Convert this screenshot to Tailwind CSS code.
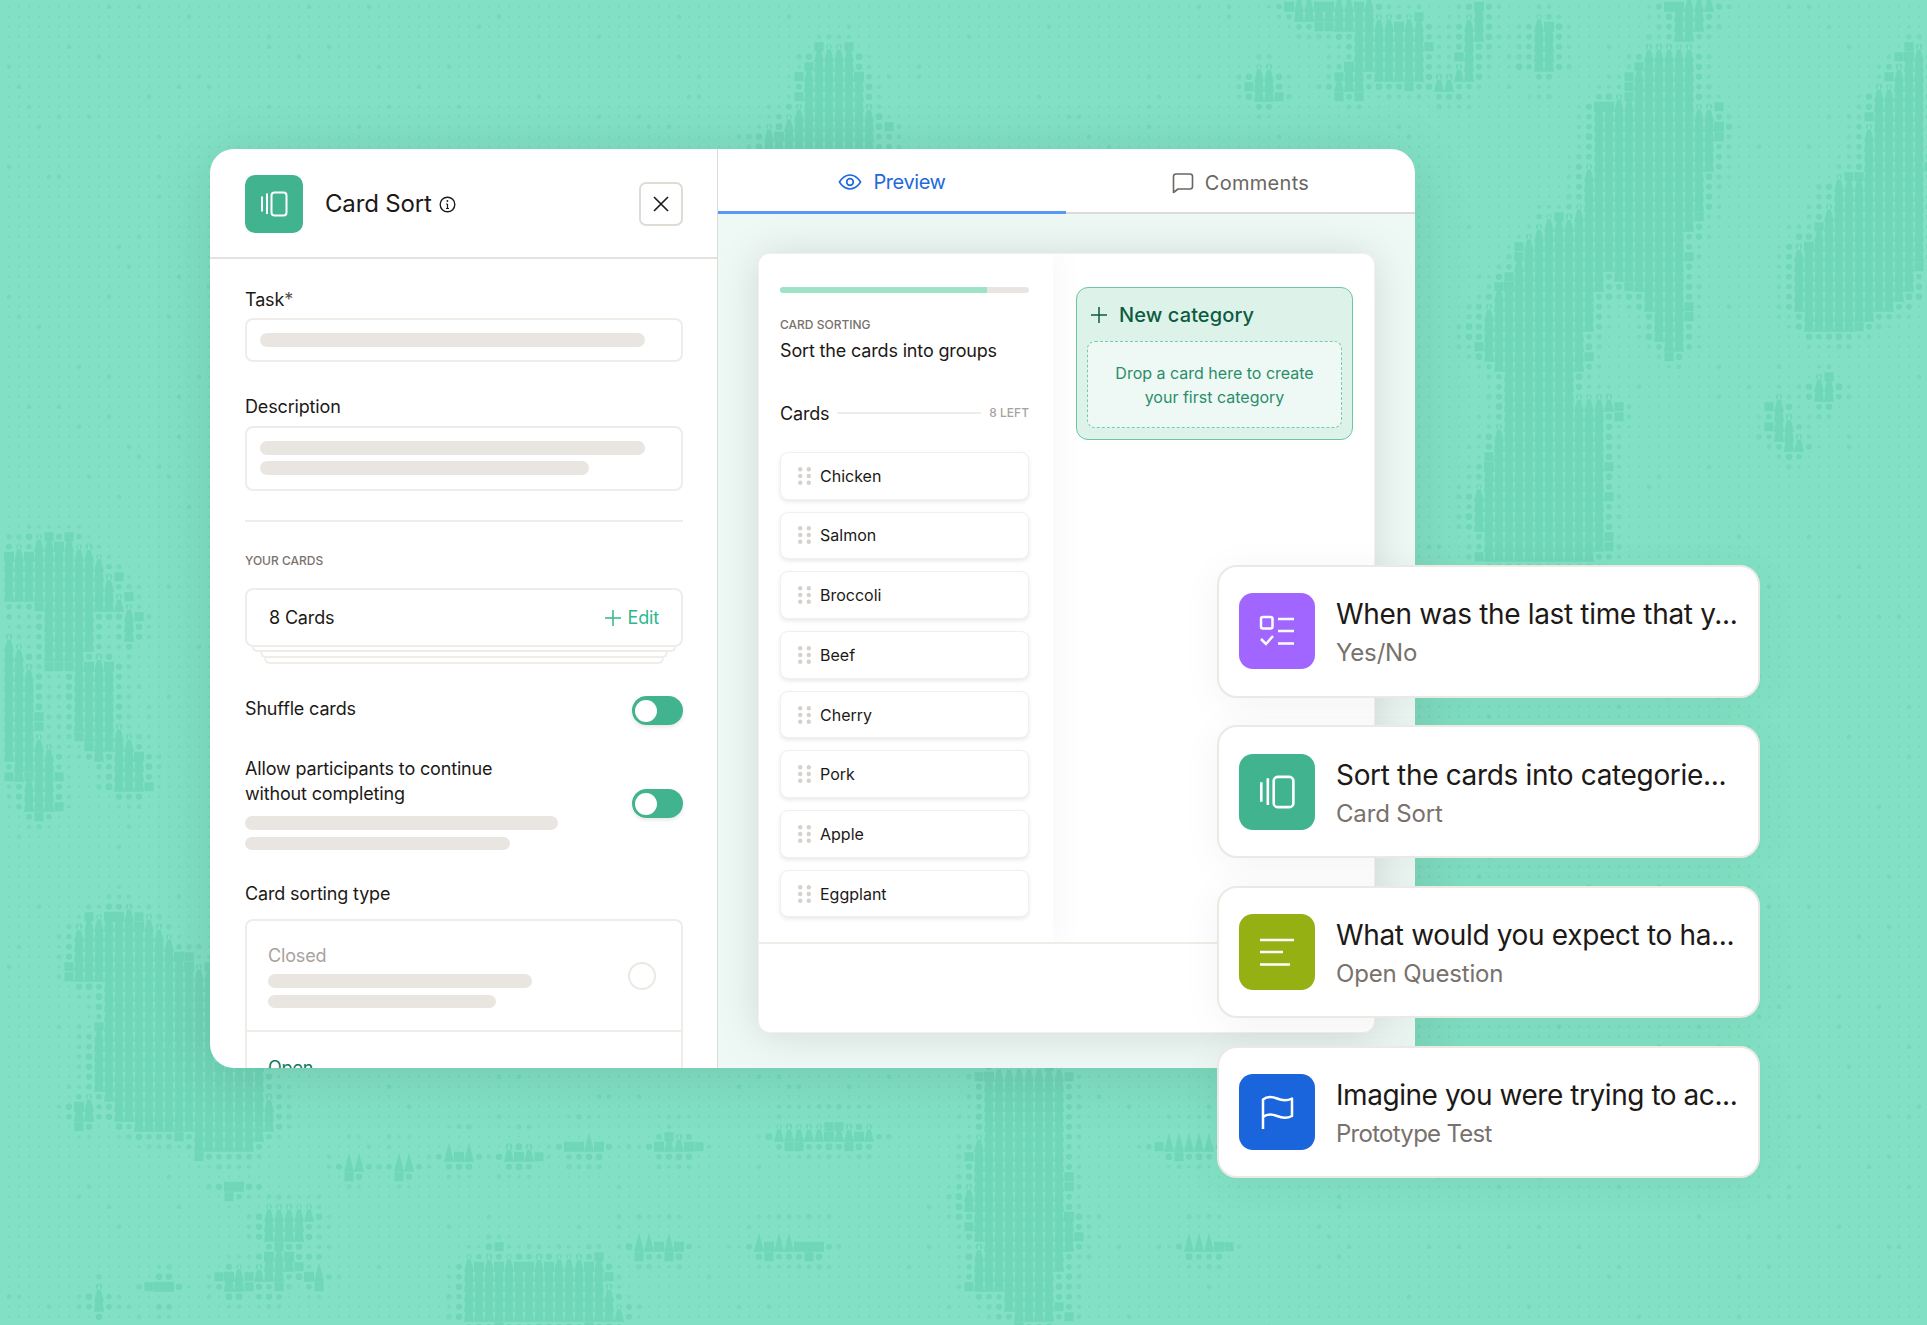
<!DOCTYPE html>
<html lang="en">
<head>
<meta charset="utf-8">
<title>Card Sort</title>
<script src="https://cdn.jsdelivr.net/npm/@tailwindcss/browser@4"></script>
</head>
<body class="m-0">
<svg width="0" height="0" class="absolute">
  <symbol id="dots" viewBox="0 0 13 18">
    <circle cx="2.2" cy="2.2" r="2.2"/><circle cx="10.8" cy="2.2" r="2.2"/>
    <circle cx="2.2" cy="9" r="2.2"/><circle cx="10.8" cy="9" r="2.2"/>
    <circle cx="2.2" cy="15.8" r="2.2"/><circle cx="10.8" cy="15.8" r="2.2"/>
  </symbol>
  <symbol id="cardsort" viewBox="0 0 58 58">
    <rect x="26.5" y="17.5" width="15" height="23" rx="3" fill="none" stroke="#fff" stroke-width="2"/>
    <path d="M17 21.5v15M22 18.5v20.5" fill="none" stroke="#fff" stroke-width="2"/>
  </symbol>
</svg>
<div class="relative w-[1927px] h-[1325px] overflow-hidden bg-[#82e1c4] pt-[149px] pl-[210px] text-[#1c1917] tracking-[-0.01em] font-['Inter',sans-serif]">
  <svg class="absolute inset-0" width="1927" height="1325" viewBox="0 0 1927 1325" aria-hidden="true">
    <path id="bgsmall" class="fill-[#74d8ba]"></path>
    <path id="bgbig" class="fill-[#70d6b8]"></path>
  </svg>

  <!-- Main panel -->
  <div class="relative flex w-[1205px] h-[919px] rounded-[24px] overflow-hidden bg-white shadow-[0_8px_60px_rgba(0,0,0,0.11)]">
    <!-- Left form -->
    <div class="w-[508px] shrink-0 overflow-hidden border-r border-[#dedad5]">
      <div class="flex items-center h-[110px] pt-[1px] pl-[35px] pr-[34px] border-b-2 border-[#e5e1dc]">
        <div class="w-[58px] h-[58px] rounded-[10px] bg-[#41b38f]"><svg width="58" height="58"><use href="#cardsort"/></svg></div>
        <span class="ml-[22px] text-[24px] leading-[32px]">Card Sort</span>
        <svg class="ml-[7px] mt-[1px]" width="17" height="17" viewBox="0 0 17 17" fill="none" stroke="#1c1917" stroke-width="1.4"><circle cx="8.5" cy="8.5" r="7.3"/><path d="M8.5 8v4.5M7 8h1.5M7 12.5h3" stroke-width="1.2"/><circle cx="8.4" cy="5" r=".9" fill="#1c1917" stroke="none"/></svg>
        <div class="ml-auto flex items-center justify-center w-[44px] h-[44px] rounded-[7px] border-2 border-[#e0dbd5]">
          <svg width="16" height="16" viewBox="0 0 16 16" fill="none" stroke="#1c1917" stroke-width="1.6"><path d="M1 1l14 14M15 1L1 15"/></svg>
        </div>
      </div>
      <div class="pl-[35px] pr-[34px] pt-[29px]">
        <div class="text-[18px] leading-[24px]">Task<span class="text-[#57534e]">*</span></div>
        <div class="mt-[6px] h-[44px] rounded-[8px] border-2 border-[#f0ece8] flex items-center pl-[13px]">
          <div class="w-[385px] h-[14px] rounded-full bg-[#e9e6e1]"></div>
        </div>
        <div class="mt-[33px] text-[18px] leading-[24px]">Description</div>
        <div class="mt-[7px] h-[65px] rounded-[8px] border-2 border-[#f0ece8] pl-[13px] pt-[13px]">
          <div class="w-[385px] h-[14px] rounded-full bg-[#e9e6e1]"></div>
          <div class="mt-[6px] w-[329px] h-[14px] rounded-full bg-[#e9e6e1]"></div>
        </div>
        <div class="mt-[29px] border-t-2 border-[#f0ece8]"></div>
        <div class="mt-[31px] text-[12px] leading-[16px] tracking-normal font-medium text-[#78716c] uppercase">Your cards</div>
        <div class="mt-[19px] h-[59px] rounded-[8px] border-2 border-[#f0ece8] flex items-center justify-between pl-[22px] pr-[22px]">
          <span class="text-[18px] leading-[24px]">8 Cards</span>
          <span class="flex items-center gap-[7px] text-[18px] leading-[24px] text-[#2fb68e]">
            <svg width="16" height="16" viewBox="0 0 16 16" fill="none" stroke="#2fb68e" stroke-width="1.5"><path d="M8 0v16M0 8h16"/></svg>Edit
          </span>
        </div>
        <div class="mx-[7px] h-[5px] rounded-b-[6px] border-x-2 border-b-2 border-[#f0ece8]"></div>
        <div class="mx-[15px] h-[6px] rounded-b-[6px] border-x-2 border-b-2 border-[#f0ece8]"></div>
        <div class="mx-[19px] h-[6px] rounded-b-[6px] border-x-2 border-b-2 border-[#f0ece8]"></div>

        <div class="mt-[33px] flex items-start justify-between">
          <span class="text-[18px] leading-[24px]">Shuffle cards</span>
          <div class="-mt-[1px] flex items-center w-[51px] h-[29px] pl-[3px] rounded-full bg-[#41b38f] shadow-[0_2px_4px_rgba(0,0,0,0.1)]"><div class="w-[22px] h-[22px] rounded-full bg-white"></div></div>
        </div>
        <div class="mt-[32px] flex items-start justify-between">
          <div>
            <div class="text-[18px] leading-[24.5px]">Allow participants to continue<br>without completing</div>
            <div class="mt-[10px] w-[313px] h-[14px] rounded-full bg-[#e9e6e1]"></div>
            <div class="mt-[7px] w-[265px] h-[13px] rounded-full bg-[#e9e6e1]"></div>
          </div>
          <div class="mt-[32px] flex items-center w-[51px] h-[29px] pl-[3px] rounded-full bg-[#41b38f] shadow-[0_2px_4px_rgba(0,0,0,0.1)]"><div class="w-[22px] h-[22px] rounded-full bg-white"></div></div>
        </div>
        <div class="mt-[32px] text-[18px] leading-[24px]">Card sorting type</div>
        <div class="mt-[13px] rounded-t-[8px] border-x-2 border-t-2 border-[#f0ece8]">
          <div class="flex items-center justify-between h-[111px] pl-[21px] pr-[25px] border-b-2 border-[#f0ece8]">
            <div>
              <div class="text-[18px] leading-[24px] text-[#a8a29e]">Closed</div>
              <div class="mt-[6px] w-[264px] h-[14px] rounded-full bg-[#e9e6e1]"></div>
              <div class="mt-[7px] w-[228px] h-[13px] rounded-full bg-[#e9e6e1]"></div>
            </div>
            <div class="w-[28px] h-[28px] rounded-full border-2 border-[#ece8e4]"></div>
          </div>
          <div class="pl-[21px] pt-[24px] text-[18px] leading-[24px] text-[#0f7a5a]">Open</div>
        </div>
      </div>
    </div>

    <!-- Right preview -->
    <div class="flex-1 flex flex-col min-w-0">
      <div class="flex h-[65px] shrink-0 tracking-normal">
        <div class="w-[348px] flex items-center justify-center gap-[11px] pt-[4px] border-b-[3px] border-[#5b98f5] text-[20px] text-[#1f69dd]">
          <svg width="24" height="24" viewBox="0 0 24 24" fill="none" stroke="#1f69dd" stroke-width="1.7"><path d="M1.5 12S5.3 5 12 5s10.500 7 10.500 7-3.800 7-10.500 7S1.500 12 1.500 12z"/><circle cx="12" cy="12" r="3.300"/></svg>
          <span class="tracking-[-0.02em]">Preview</span>
        </div>
        <div class="flex-1 flex items-center justify-center gap-[11px] pt-[4px] border-b-2 border-[#dedad5] text-[20px] text-[#6b6661]">
          <svg width="22" height="22" viewBox="0 0 22 22" fill="none" stroke="#6b6661" stroke-width="1.6"><path d="M1.500 4.500a2.500 2.500 0 0 1 2.500-2.500h14a2.500 2.500 0 0 1 2.500 2.500v10a2.500 2.500 0 0 1-2.500 2.500H6l-4.500 3.500z" stroke-linejoin="round"/></svg>
          <span class="tracking-[0.015em]">Comments</span>
        </div>
      </div>
      <div class="flex-1 bg-[#eef9f5] pl-[40px] pt-[39px]">
        <div class="flex flex-col w-[617px] h-[780px] rounded-[12px] bg-white overflow-hidden shadow-[0_2px_44px_rgba(0,0,0,0.13)] border border-[#f3efeb]">
          <div class="flex h-[688px] overflow-hidden">
            <div class="relative w-[294px] shrink-0 pl-[21px] pr-[24px] pt-[33px] bg-white shadow-[6px_0_30px_rgba(0,0,0,0.035)]">
              <div class="h-[6px] rounded-full bg-[#e9e6e1] overflow-hidden"><div class="w-[83%] h-full bg-[#9ee3c8]"></div></div>
              <div class="mt-[24px] text-[12px] leading-[16px] tracking-normal font-medium text-[#78716c] uppercase">Card sorting</div>
              <div class="mt-[6px] text-[18px] leading-[24px]">Sort the cards into groups</div>
              <div class="mt-[38px] flex items-center h-[24px]">
                <span class="text-[18px]">Cards</span>
                <div class="flex-1 mx-[8px] border-t-2 border-[#f0ece8]"></div>
                <span class="text-[12px] tracking-normal font-medium text-[#a8a29e]">8 LEFT</span>
              </div>
              <div class="mt-[27px] flex flex-col gap-[12.2px] tracking-normal">
                <div class="flex items-center gap-[9px] h-[47.5px] pl-[17px] rounded-[8px] bg-white border border-[#f3f0ec] shadow-[0_2px_4px_rgba(0,0,0,0.09)] text-[16px]"><svg class="fill-[#d6d1ca]" width="13" height="18"><use href="#dots"/></svg>Chicken</div>
                <div class="flex items-center gap-[9px] h-[47.5px] pl-[17px] rounded-[8px] bg-white border border-[#f3f0ec] shadow-[0_2px_4px_rgba(0,0,0,0.09)] text-[16px]"><svg class="fill-[#d6d1ca]" width="13" height="18"><use href="#dots"/></svg>Salmon</div>
                <div class="flex items-center gap-[9px] h-[47.5px] pl-[17px] rounded-[8px] bg-white border border-[#f3f0ec] shadow-[0_2px_4px_rgba(0,0,0,0.09)] text-[16px]"><svg class="fill-[#d6d1ca]" width="13" height="18"><use href="#dots"/></svg>Broccoli</div>
                <div class="flex items-center gap-[9px] h-[47.5px] pl-[17px] rounded-[8px] bg-white border border-[#f3f0ec] shadow-[0_2px_4px_rgba(0,0,0,0.09)] text-[16px]"><svg class="fill-[#d6d1ca]" width="13" height="18"><use href="#dots"/></svg>Beef</div>
                <div class="flex items-center gap-[9px] h-[47.5px] pl-[17px] rounded-[8px] bg-white border border-[#f3f0ec] shadow-[0_2px_4px_rgba(0,0,0,0.09)] text-[16px]"><svg class="fill-[#d6d1ca]" width="13" height="18"><use href="#dots"/></svg>Cherry</div>
                <div class="flex items-center gap-[9px] h-[47.5px] pl-[17px] rounded-[8px] bg-white border border-[#f3f0ec] shadow-[0_2px_4px_rgba(0,0,0,0.09)] text-[16px]"><svg class="fill-[#d6d1ca]" width="13" height="18"><use href="#dots"/></svg>Pork</div>
                <div class="flex items-center gap-[9px] h-[47.5px] pl-[17px] rounded-[8px] bg-white border border-[#f3f0ec] shadow-[0_2px_4px_rgba(0,0,0,0.09)] text-[16px]"><svg class="fill-[#d6d1ca]" width="13" height="18"><use href="#dots"/></svg>Apple</div>
                <div class="flex items-center gap-[9px] h-[47.5px] pl-[17px] rounded-[8px] bg-white border border-[#f3f0ec] shadow-[0_2px_4px_rgba(0,0,0,0.09)] text-[16px]"><svg class="fill-[#d6d1ca]" width="13" height="18"><use href="#dots"/></svg>Eggplant</div>
              </div>
            </div>
            <div class="flex-1 pl-[23px] pr-[21px] pt-[33px] tracking-normal">
              <div class="h-[153px] rounded-[12px] border-[1.5px] border-[#6cc6a5] bg-[#ddf3ea]">
                <div class="flex items-center gap-[12px] h-[53px] pl-[14px] text-[20px] font-medium tracking-[0.005em] text-[#0d5c42]">
                  <svg width="16" height="16" viewBox="0 0 16 16" fill="none" stroke="#0d5c42" stroke-width="1.500"><path d="M8 0v16M0 8h16"/></svg>
                  New category
                </div>
                <div class="mx-[10px] h-[87px] flex items-center justify-center text-center rounded-[8px] border-[1.5px] border-dashed border-[#72cdaa] bg-[#eef9f5] text-[16px] leading-[24px] text-[#2a8d69]">Drop a card here to create<br>your first category</div>
              </div>
            </div>
          </div>
          <div class="flex-1 border-t-2 border-[#f0ece8]"></div>
        </div>
      </div>
    </div>
  </div>

  <!-- Floating question cards -->
  <div class="absolute left-[1217px] top-[565px] z-10 flex flex-col gap-[27.800px] w-[543px]">
    <div class="flex items-center h-[132.500px] pl-[19.500px] rounded-[20px] bg-white border-2 border-[#ece8e3] shadow-[0_6px_40px_rgba(0,0,0,0.05)]">
      <div class="w-[76px] h-[76px] shrink-0 rounded-[14px] bg-[#a066ff]">
        <svg width="76" height="76" viewBox="0 0 76 76" fill="none" stroke="#fff" stroke-width="2.500"><rect x="22" y="24" width="11.500" height="11.500" rx="2"/><path d="M39 26h16M39 38h16M39 50.500h16M22 46l5 5 7-8"/></svg>
      </div>
      <div class="ml-[21.500px] pt-[3px]">
        <div class="text-[28px] leading-[36px] tracking-[-0.012em]">When was the last time that y...</div>
        <div class="mt-[5px] text-[24px] leading-[32px] text-[#78716c]">Yes/No</div>
      </div>
    </div>
    <div class="flex items-center h-[132.500px] pl-[19.500px] rounded-[20px] bg-white border-2 border-[#ece8e3] shadow-[0_6px_40px_rgba(0,0,0,0.05)]">
      <div class="w-[76px] h-[76px] shrink-0 rounded-[14px] bg-[#41b38f]"><svg width="76" height="76"><use href="#cardsort"/></svg></div>
      <div class="ml-[21.500px] pt-[3px]">
        <div class="text-[28px] leading-[36px] tracking-[-0.012em]">Sort the cards into categorie...</div>
        <div class="mt-[5px] text-[24px] leading-[32px] text-[#78716c]">Card Sort</div>
      </div>
    </div>
    <div class="flex items-center h-[132.500px] pl-[19.500px] rounded-[20px] bg-white border-2 border-[#ece8e3] shadow-[0_6px_40px_rgba(0,0,0,0.05)]">
      <div class="w-[76px] h-[76px] shrink-0 rounded-[14px] bg-[#94b013]">
        <svg width="76" height="76" viewBox="0 0 76 76" fill="none" stroke="#fff" stroke-width="2.500"><path d="M21 26h34M21 38h23M21 50.500h30"/></svg>
      </div>
      <div class="ml-[21.500px] pt-[3px]">
        <div class="text-[28px] leading-[36px] tracking-[-0.012em]">What would you expect to ha...</div>
        <div class="mt-[5px] text-[24px] leading-[32px] text-[#78716c]">Open Question</div>
      </div>
    </div>
    <div class="flex items-center h-[132.500px] pl-[19.500px] rounded-[20px] bg-white border-2 border-[#ece8e3] shadow-[0_6px_40px_rgba(0,0,0,0.05)]">
      <div class="w-[76px] h-[76px] shrink-0 rounded-[14px] bg-[#1a64dc]">
        <svg width="76" height="76" viewBox="0 0 76 76" fill="none" stroke="#fff" stroke-width="2.500" stroke-linejoin="round"><path d="M24 55V25.500c3-2.500 8-3.500 14-1s11 2 15 0V42c-4 2-9 2.500-15 0s-11-1.500-14 1"/></svg>
      </div>
      <div class="ml-[21.500px] pt-[3px]">
        <div class="text-[28px] leading-[36px] tracking-[-0.016em]">Imagine you were trying to ac...</div>
        <div class="mt-[5px] text-[24px] leading-[32px] tracking-[-0.03em] text-[#78716c]">Prototype Test</div>
      </div>
    </div>
  </div>
</div>

<script>
(function () {
  // Halftone background: blobs are traced from the picture, given in crop coordinates.
  var T = {
    right: function (p) { return [1200 + p[0] / 2.157, p[1] / 2.8]; },
    top: function (p) { return [p[0] / 1.307, p[1] / 3]; },
    bottom: function (p) { return [p[0] / 1.285, 1060 + p[1] / 3]; },
    left: function (p) { return [p[0] / 3, 150 + p[1] / 1.704]; }
  };
  var raw = [
    ['right', [[190,0],[380,0],[380,70],[490,70],[490,230],[400,230],[350,190],[340,265],[290,265],[320,180],[340,90],[190,40]]],
    ['right', [[120,200],[165,200],[165,290],[120,290]]],
    ['right', [[590,0],[620,0],[600,130],[590,230],[510,260],[510,240],[560,200]]],
    ['right', [[720,70],[765,70],[765,210],[705,210],[725,130]]],
    ['right', [[1010,0],[1120,0],[1090,40],[1060,120],[1020,120]]],
    ['right', [[970,140],[1060,150],[1070,320],[1125,330],[1100,460],[1080,590],[1040,700],[1050,850],[1040,985],[1000,985],[960,830],[880,765],[845,880],[825,1000],[795,1110],[885,1130],[870,1300],[860,1568],[620,1568],[590,1420],[650,1200],[660,1050],[610,1010],[600,920],[640,820],[700,720],[720,640],[810,620],[840,480],[850,300],[920,290]]],
    ['right', [[1520,130],[1568,150],[1568,640],[1530,830],[1470,870],[1390,925],[1305,925],[1280,830],[1285,700],[1350,630],[1370,500],[1430,500],[1450,280],[1500,240]]],
    ['right', [[1240,1120],[1270,1170],[1300,1265],[1260,1265],[1235,1200]]],
    ['right', [[1330,1080],[1365,1080],[1365,1130],[1330,1130]]],
    ['top', [[1075,150],[1105,150],[1120,200],[1130,310],[1148,380],[1148,450],[1005,450],[1005,410],[1045,320],[1060,200]]],
    ['left', [[0,690],[130,670],[270,680],[340,740],[370,785],[290,790],[270,860],[140,870],[130,770],[0,780]]],
    ['left', [[0,830],[40,840],[100,900],[100,1060],[50,1070],[0,1000]]],
    ['left', [[230,860],[330,880],[340,1000],[310,1050],[240,990],[220,960]]],
    ['left', [[70,1120],[110,1010],[160,1040],[160,1120]]],
    ['left', [[345,980],[400,1010],[430,1040],[430,1090],[345,1090]]],
    ['left', [[370,785],[400,785],[400,835],[370,835]]],
    ['left', [[220,1340],[350,1290],[500,1340],[580,1390],[630,1400],[630,1568],[280,1568],[320,1420],[220,1410]]],
    ['bottom', [[120,0],[340,0],[350,210],[320,262],[250,285],[250,210],[190,210],[150,180],[140,120],[120,60]]],
    ['bottom', [[1270,30],[1370,30],[1370,440],[1385,530],[1360,640],[1360,790],[1300,790],[1290,700],[1250,700],[1260,560],[1240,430],[1260,240]]],
    ['bottom', [[600,600],[640,590],[770,620],[780,690],[810,795],[600,795]]],
    ['bottom', [[1000,205],[1120,205],[1120,235],[1000,235]]],
    ['bottom', [[730,235],[780,235],[780,262],[730,262]]],
    ['bottom', [[838,235],[888,235],[888,265],[838,265]]],
    ['bottom', [[570,265],[605,265],[605,292],[570,292]]],
    ['bottom', [[645,265],[682,265],[682,295],[645,295]]],
    ['bottom', [[445,295],[468,295],[468,322],[445,322]]],
    ['bottom', [[505,295],[528,295],[528,322],[505,322]]],
    ['bottom', [[285,355],[312,355],[312,382],[285,382]]],
    ['bottom', [[315,325],[340,325],[340,350],[315,350]]],
    ['bottom', [[345,450],[402,450],[388,560],[340,560]]],
    ['bottom', [[340,565],[375,565],[375,620],[362,680],[325,680],[335,620]]],
    ['bottom', [[820,535],[875,535],[875,562],[820,562]]],
    ['bottom', [[965,535],[1060,535],[1060,562],[965,562]]],
    ['bottom', [[388,622],[415,622],[415,652],[388,652]]],
    ['bottom', [[1490,235],[1560,235],[1560,262],[1490,262]]],
    ['bottom', [[1520,535],[1568,535],[1568,562],[1520,562]]],
    ['bottom', [[95,130],[120,130],[120,180],[95,180]]],
    ['bottom', [[120,710],[135,710],[135,742],[120,742]]],
    ['bottom', [[195,680],[222,680],[222,710],[195,710]]],
    ['bottom', [[285,650],[312,650],[312,682],[285,682]]],
    ['bottom', [[0,775],[30,775],[30,795],[0,795]]]
  ];
  var polys = raw.map(function (r) { return r[1].map(T[r[0]]); });
  var boxes = polys.map(function (p) {
    var xs = p.map(function (q) { return q[0]; }), ys = p.map(function (q) { return q[1]; });
    return [Math.min.apply(0, xs), Math.min.apply(0, ys), Math.max.apply(0, xs), Math.max.apply(0, ys)];
  });
  function inside(x, y) {
    for (var k = 0; k < polys.length; k++) {
      var b = boxes[k];
      if (x < b[0] || x > b[2] || y < b[1] || y > b[3]) continue;
      var p = polys[k], c = false;
      for (var i = 0, j = p.length - 1; i < p.length; j = i++) {
        if ((p[i][1] > y) !== (p[j][1] > y) && x < (p[j][0] - p[i][0]) * (y - p[i][1]) / (p[j][1] - p[i][1]) + p[i][0]) c = !c;
      }
      if (c) return true;
    }
    return false;
  }
  function hash(a, b) { var s = Math.sin(a * 12.9898 + b * 78.233) * 43758.5453; return s - Math.floor(s); }
  function circle(x, y, r) { return 'M' + (x - r) + ' ' + y + 'a' + r + ' ' + r + ' 0 1 0 ' + (2 * r) + ' 0a' + r + ' ' + r + ' 0 1 0 ' + (-2 * r) + ' 0z'; }
  var small = [], big = [];
  for (var gy = 0; gy < 133; gy++) {
    for (var gx = 0; gx < 193; gx++) {
      var x = 9 + gx * 10, y = 6.7 + gy * 10, h = hash(gx, gy);
      if (inside(x, y)) {
        var up = inside(x, y - 10);
        if (up) big.push('M' + (x - 5) + ' ' + (y + 5) + 'L' + (x - 3.5) + ' ' + (y - 5) + 'H' + (x + 3.5) + 'L' + (x + 5) + ' ' + (y + 5) + 'z');
        else if (h < 0.7) big.push('M' + (x - 5) + ' ' + (y + 5) + 'L' + x + ' ' + (y - 14) + 'L' + (x + 5) + ' ' + (y + 5) + 'z');
        else big.push('M' + (x - 5) + ' ' + (y - 5) + 'h10v10h-10z');
      } else {
        var near = inside(x - 11, y) || inside(x + 11, y) || inside(x, y - 11) || inside(x, y + 11);
        var near2 = near || inside(x - 22, y) || inside(x + 22, y) || inside(x, y - 22) || inside(x, y + 22);
        if (near && h < 0.15) big.push('M' + (x - 4.5) + ' ' + (y - 4.5) + 'h9v9h-9z');
        else if (near) big.push(circle(x, y, 2.4 + h));
        else if (near2) small.push(circle(x, y, 1.5 + h * 1.2));
        else small.push(circle(x, y, h > 0.97 ? 2.2 : 1.1));
      }
    }
  }
  document.getElementById('bgsmall').setAttribute('d', small.join(''));
  document.getElementById('bgbig').setAttribute('d', big.join(''));
})();
</script>
</body>
</html>
